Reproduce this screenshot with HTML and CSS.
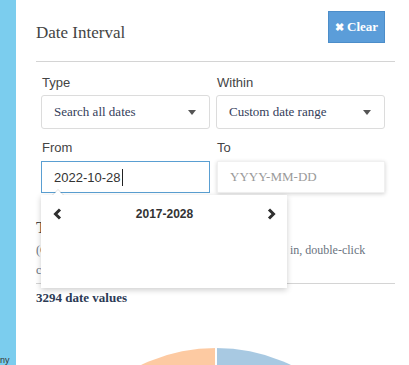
FILE: index.html
```html
<!DOCTYPE html>
<html>
<head>
<meta charset="utf-8">
<link rel="stylesheet" href="styles.css">
</head>
<body>
<aside class="sidebar"><span class="side-label">ny</span></aside>
<main class="main">
  <header class="header">
    <h2 class="title">Date Interval</h2>
    <button class="btn-clear"><span class="x-icon">✖</span> Clear</button>
  </header>
  <div class="form">
    <div class="field">
      <label class="label">Type</label>
      <div class="select"><span>Search all dates</span><svg class="caret" width="8" height="5" viewBox="0 0 8 5"><path d="M0 0H8L4 5Z" fill="#555"/></svg></div>
    </div>
    <div class="field">
      <label class="label">Within</label>
      <div class="select"><span>Custom date range</span><svg class="caret" width="8" height="5" viewBox="0 0 8 5"><path d="M0 0H8L4 5Z" fill="#555"/></svg></div>
    </div>
    <div class="field from">
      <label class="label">From</label>
      <div class="input focused"><span class="val">2022-10-28</span><span class="cursor"></span></div>
      <div class="datepicker">
        <div class="dp-head">
          <svg width="9" height="12" viewBox="0 0 9 12"><polyline points="7,1.5 2.5,6 7,10.5" fill="none" stroke="#2f2f2f" stroke-width="3"/></svg>
          <span class="dp-title">2017-2028</span>
          <svg width="9" height="12" viewBox="0 0 9 12"><polyline points="2,1.5 6.5,6 2,10.5" fill="none" stroke="#2f2f2f" stroke-width="3"/></svg>
        </div>
      </div>
    </div>
    <div class="field">
      <label class="label">To</label>
      <div class="input shadowed"><span class="placeholder">YYYY-MM-DD</span></div>
    </div>
  </div>
  <section class="timeline">
    <h2 class="title sub">Timeline</h2>
    <p class="hint">(Click and drag over the timeline chart area to zoom in, double-click<br>click on the chart to reset the zoom)</p>
  </section>
  <div class="count">3294 date values</div>
  <div class="chart"><div class="pie"></div></div>
</main>
</body>
</html>
```
FILE: styles.css
```css
html, body {
  margin: 0;
  height: 100%;
  overflow: hidden;
  background: #fff;
}
body {
  display: flex;
  font-family: "Liberation Serif", serif;
}
.sidebar {
  width: 16px;
  flex: none;
  background: #7bcdee;
  display: flex;
  flex-direction: column;
  justify-content: flex-end;
  overflow: hidden;
}
.side-label {
  font-family: "Liberation Sans", sans-serif;
  font-size: 9px;
  color: #333;
  line-height: 10px;
  margin-bottom: 0;
}
.main {
  flex: 1;
  padding: 0 14px 0 20px;
  min-width: 0;
}
.header {
  height: 61px;
  border-bottom: 1px solid #d4d4d4;
  display: flex;
  justify-content: space-between;
  align-items: flex-start;
}
.title {
  margin: 23px 0 0;
  font-size: 17px;
  line-height: 20px;
  font-weight: normal;
  color: #444;
}
.btn-clear {
  margin: 11px 10px 0 0;
  width: 57px;
  height: 32px;
  background: #5b9dd9;
  border: 1px solid #4c8dc9;
  color: #fff;
  font-family: "Liberation Serif", serif;
  font-weight: bold;
  font-size: 13px;
  padding: 0;
}
.x-icon {
  font-size: 11px;
}
.form {
  padding: 0 10px 0 5px;
  display: grid;
  grid-template-columns: 1fr 1fr;
  column-gap: 6px;
}
.field {
  display: flex;
  flex-direction: column;
  position: relative;
}
.label {
  font-family: "Liberation Sans", sans-serif;
  font-size: 13px;
  line-height: 16px;
  color: #444;
  margin: 13px 0 4px 1px;
}
.from .label, .from + .field .label {
  margin-top: 11px;
  margin-bottom: 5px;
}
.select {
  height: 34px;
  box-sizing: border-box;
  border: 1px solid #dcdcdc;
  border-radius: 3px;
  display: flex;
  align-items: center;
  justify-content: space-between;
  padding: 0 13px 0 12px;
  font-size: 13px;
  color: #34405a;
}
.input {
  height: 32px;
  box-sizing: border-box;
  display: flex;
  align-items: center;
  padding: 0 12px;
  font-size: 13px;
}
.focused {
  border: 1px solid #5a9fd2;
}
.val {
  font-family: "Liberation Sans", sans-serif;
  color: #333;
}
.cursor {
  width: 1px;
  height: 17px;
  background: #222;
  margin-left: 1px;
}
.shadowed {
  margin-left: 1px;
  border: 1px solid #f0f0f0;
  box-shadow: 0 1px 4px rgba(0, 0, 0, 0.18);
}
.placeholder {
  color: #9a9a9a;
}
.datepicker {
  position: absolute;
  top: 100%;
  left: 0;
  margin-top: 2px;
  width: 246px;
  height: 93px;
  box-sizing: border-box;
  background: #fff;
  box-shadow: 0 2px 6px rgba(0, 0, 0, 0.2);
  z-index: 10;
  padding: 12px 11px 0 12px;
}
.datepicker::before {
  content: "";
  position: absolute;
  top: -6px;
  left: 11px;
  border-left: 6px solid transparent;
  border-right: 6px solid transparent;
  border-bottom: 6px solid rgba(0, 0, 0, 0.12);
}
.datepicker::after {
  content: "";
  position: absolute;
  top: -5px;
  left: 12px;
  border-left: 5px solid transparent;
  border-right: 5px solid transparent;
  border-bottom: 5px solid #fff;
}
.dp-head {
  display: flex;
  align-items: center;
  justify-content: space-between;
  height: 14px;
}
.dp-title {
  font-family: "Liberation Sans", sans-serif;
  font-weight: bold;
  font-size: 12px;
  color: #333;
}
.timeline {
  border-bottom: 1px solid #d4d4d4;
  padding-bottom: 3px;
}
.title.sub {
  margin-top: 25px;
  color: #444;
}
.hint {
  margin: 2px 0 0;
  font-size: 12px;
  line-height: 20px;
  color: #6a7380;
  white-space: nowrap;
}
.count {
  margin-top: 6px;
  font-weight: bold;
  font-size: 13px;
  line-height: 16px;
  color: #2c3a55;
}
.chart {
  margin-top: 42px;
  display: flex;
  justify-content: center;
}
.pie {
  flex: none;
  width: 348px;
  height: 348px;
  border-radius: 50%;
  background: linear-gradient(to right, #fdcaa2 0 calc(50% - 1px), #fff calc(50% - 1px) calc(50% + 1px), #a8c9e2 calc(50% + 1px));
}
```
